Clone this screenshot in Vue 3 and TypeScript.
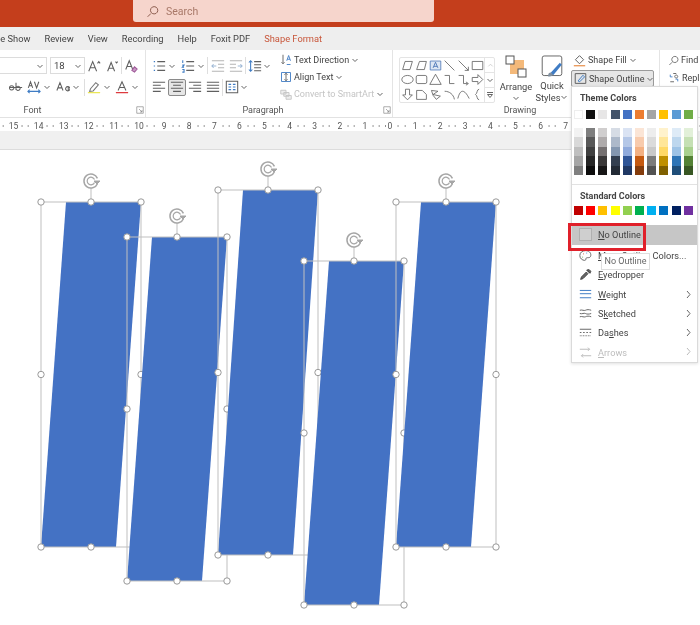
<script setup lang="ts">
import { h } from 'vue';

type Layer = [string, string, string?];

const ink = '#5f5f5f';
const blue = '#3f7cc4';
const icons: Record<string, Layer[]> = {
  search: [['#8a5a4c', 'M6 10.5 2 14.5M10 2a4.5 4.5 0 1 1-.01 0']],
  grow: [[ink, 'M2 14 6.5 3 11 14M3.8 10h5.4M12 5l1.5-2L15 5']],
  shrink: [[ink, 'M3 14 7 4l4 10M4.6 10.5h4.8M12 3l1.2 1.5L14.5 3']],
  clearfmt: [[ink, 'M2 12 6 2l4 10M3.4 8.5h5.2'], ['#a05a9a', 'M9 13l3-4 3 2.5-3 3.5z', '#c79ac4']],
  strike: [[ink, 'M3 6.5a2.5 2.5 0 1 0 .01 0M8 3v8.5M8 9a2.4 2.4 0 1 1 0 1M1 8.5h14']],
  spacing: [[ink, 'M1.5 9 4 2l2.5 7M2.4 6.5h3.2M8.5 2l2.5 7 2.5-7'], [blue, 'M1 13h14M3 11l-2 2 2 2M13 11l2 2-2 2']],
  change: [[ink, 'M1 12 4.5 3 8 12M2.2 9h4.6M13.5 7.5a2.5 2.5 0 1 0 .01 0M14 7v5']],
  highlight: [['#777', 'M4 10l6-7 3 2.5-6 7-4 .5z'], ['#e8e337', 'M1 14.5h14', 'none']],
  fontcolor: [[ink, 'M3.5 12 8 2l4.5 10M5 8.5h6'], ['#d7141a', 'M1 14.5h14']],
  bullets: [[blue, 'M2 3h1.5M2 8h1.5M2 13h1.5'], [ink, 'M6 3h9M6 8h9M6 13h9']],
  numbers: [[blue, 'M2 1.5v3M1.5 7h2l-2 2.5h2M1.5 12h2v3h-2'], [ink, 'M6 3h9M6 8h9M6 13h9']],
  indentDec: [['#b5b5b5', 'M1 2h14M8 6h7M8 10h7M1 14h14'], ['#9fb9d6', 'M6 8H1M3 6 1 8l2 2']],
  indentInc: [['#b5b5b5', 'M1 2h14M1 6h7M1 10h7M1 14h14'], ['#9fb9d6', 'M10 8h5M13 6l2 2-2 2']],
  linespace: [[blue, 'M3 2v12M1 4l2-2 2 2M1 12l2 2 2-2'], [ink, 'M7 3h8M7 6.5h8M7 10h8M7 13.5h8']],
  left: [[ink, 'M1 2.5h14M1 6h9M1 9.5h14M1 13h9']],
  center: [[ink, 'M1 2.5h14M3.5 6h9M1 9.5h14M3.5 13h9']],
  right: [[ink, 'M1 2.5h14M6 6h9M1 9.5h14M6 13h9']],
  justify: [[ink, 'M1 2.5h14M1 6h14M1 9.5h14M1 13h14']],
  columns: [[ink, 'M1.5 1.5h13v13h-13z'], [blue, 'M4 5h3M4 8h3M4 11h3M9 5h3M9 8h3M9 11h3']],
  textdir: [[ink, 'M4 1v12M2 11l2 2 2-2'], [blue, 'M9 9l2.5-7L14 9M9.8 7h3.4M9 14h5']],
  aligntext: [[blue, 'M2 2h12v12H2z'], [ink, 'M8 3v10M6 5l2-2 2 2M6 11l2 2 2-2']],
  smartart: [['#c4c4c4', 'M1 3h7v5H1zM5 6h7v5H5zM8 10h7v5H8z', '#eee']],
  launcher: [['#777', 'M1.5 1.5h13v13h-13zM6 6l6 6M8 12h4V8']],
  para: [[ink, 'M5 3h9l-3 10H2z']],
  para2: [[ink, 'M5.5 3H14l-2.5 10H2z']],
  textbox: [['#4f79b8', 'M1.5 2.5h13v11h-13z', '#dce6f3'], ['#3c6ab0', 'M5 11l3-7 3 7M6 9h4']],
  line: [[ink, 'M2 2l12 12']],
  linearrow: [[ink, 'M2 2l12 12M14 9.5V14H9.5']],
  rect: [[ink, 'M1.5 3h13v10h-13z']],
  oval: [[ink, 'M8 3c3.9 0 7 2.2 7 5s-3.1 5-7 5-7-2.2-7-5 3.1-5 7-5z']],
  rrect: [[ink, 'M3.5 3h9a2 2 0 0 1 2 2v6a2 2 0 0 1-2 2h-9a2 2 0 0 1-2-2V5a2 2 0 0 1 2-2z']],
  tri: [[ink, 'M8 1.5 15 14H1z']],
  elbow: [[ink, 'M2 3h6v10h6']],
  elbowarrow: [[ink, 'M2 3h6v10h5M11 11l3 2-3 2']],
  arrowr: [[ink, 'M1.5 5.5h7V2l6 6-6 6v-3.5h-7z']],
  arrowd: [[ink, 'M5.5 1.5v7H2l6 6 6-6h-3.5v-7z']],
  snip: [[ink, 'M2 3h7l5 5v6H2z']],
  freeform: [[ink, 'M3 3l8 1-6 4 9 2-5 4-4-5z']],
  arc: [[ink, 'M2 4c6 0 11 4 12 10']],
  curve: [[ink, 'M1 13C4 1 9 1 15 13']],
  brace: [[ink, 'M10 1.5C7 1.5 8 7 5.5 8 8 9 7 14.5 10 14.5']],
  find: [[ink, 'M6 10.5 2 14.5M10 2a4.5 4.5 0 1 1-.01 0']],
  replace: [[blue, 'M3 3.5v3h3M13 12.5v-3h-3'], [ink, 'M7 2h4M3 13h5M11 4a2 2 0 1 1-.01 0']],
  shapefill: [[ink, 'M3 7l5-5 5 5-5 5z'], ['#e2731d', 'M1 14.5h14']],
  shapeoutline: [[ink, 'M1.5 2h13v12h-13z'], ['#3f7cc4', 'M5 11l6-7 2 2-6 6z']],
  palette: [['#666', 'M8 2C4 2 1 4.500 1 8s3 6 6 6c2 0 1-2 2-3s5 1 5.500-3C15 4.500 12 2 8 2z'], ['#d05a3c', 'M5 6h1'], ['#3f7cc4', 'M9 5h1'], ['#5aa548', 'M4 10h1']],
  eyedropper: [['#444', 'M2 14l1-3 6-6 2 2-6 6zM10 3l3 3M9.500 2.500l4 4 1-2.500-2-2z', '#666']],
  weight: [[blue, 'M1 3h14M1 7h14M1 12h14']],
  sketched: [['#666', 'M1 4c3-1 5 1 7 0s4-1 7 0M1 8c3 1 5-1 7 0s4 1 7 0M1 12c3-1 5 1 7 0s4-1 7 0']],
  dashes: [['#666', 'M1 4h14M1 8h2m2 0h2m2 0h2m2 0h2M1 12h1m1 0h1m1 0h1m1 0h1m1 0h1m1 0h1m1 0h1']],
  arrows: [['#bbb', 'M1 4h12M11 2l2 2-2 2M15 12H3M5 10l-2 2 2 2']],
};

// tiny local icon renderer, every icon is a few stroked paths on a 16 box
const Ic = (props: { n: string; s?: number; w?: number }) =>
  h(
    'svg',
    { width: props.s ?? 14, height: props.s ?? 14, viewBox: '0 0 16 16', style: 'display:block;flex:none' },
    icons[props.n].map((l) =>
      h('path', { d: l[1], stroke: l[0], fill: l[2] ?? 'none', 'stroke-width': props.w ?? 1.2 }),
    ),
  );
const Chev = () =>
  h('svg', { width: 8, height: 8, viewBox: '0 0 8 8', style: 'display:block;flex:none' }, [
    h('path', { d: 'M1.500 3 4 5.500 6.500 3', stroke: '#666', fill: 'none', 'stroke-width': 1 }),
  ]);

const tabs = ['Slide Show', 'Review', 'View', 'Recording', 'Help', 'Foxit PDF'];
const ruler = [15, 14, 13, 12, 11, 10, 9, 8, 7, 6, 5, 4, 3, 2, 1, 0, 1, 2, 3, 4, 5, 6, 7, 8, 9, 10, 11, 12];

const gallery = [
  'para', 'para2', 'textbox', 'line', 'linearrow', 'rect',
  'oval', 'rrect', 'tri', 'elbow', 'elbowarrow', 'arrowr',
  'arrowd', 'snip', 'freeform', 'arc', 'curve', 'brace',
];

const themeTop = ['#FFFFFF', '#111111', '#E7E6E6', '#44546A', '#4472C4', '#ED7D31', '#A5A5A5', '#FFC000', '#5B9BD5', '#70AD47'];
const shades = [
  ['#F2F2F2', '#D9D9D9', '#BFBFBF', '#A6A6A6', '#7F7F7F'],
  ['#7F7F7F', '#595959', '#404040', '#262626', '#0D0D0D'],
  ['#D0CECE', '#AFABAB', '#757070', '#3A3838', '#171616'],
  ['#D6DCE5', '#ADB9CA', '#8497B0', '#333F50', '#222A35'],
  ['#DAE3F3', '#B4C7E7', '#8FAADC', '#2F5597', '#203864'],
  ['#FBE5D6', '#F8CBAD', '#F4B183', '#C55A11', '#843C0C'],
  ['#EDEDED', '#DBDBDB', '#C9C9C9', '#7B7B7B', '#525252'],
  ['#FFF2CC', '#FFE699', '#FFD966', '#BF9000', '#7F6000'],
  ['#DEEBF7', '#BDD7EE', '#9DC3E6', '#2E75B6', '#1F4E79'],
  ['#E2F0D9', '#C5E0B4', '#A9D18E', '#548235', '#385723'],
];
const standard = ['#C00000', '#FF0000', '#FFC000', '#FFFF00', '#92D050', '#00B050', '#00B0F0', '#0070C0', '#002060', '#7030A0'];

const menu = [
  { icon: 'palette', pre: '', u: 'M', post: 'ore Outline Colors...', chev: false, off: false },
  { icon: 'eyedropper', pre: '', u: 'E', post: 'yedropper', chev: false, off: false },
  { icon: 'weight', pre: '', u: 'W', post: 'eight', chev: true, off: false },
  { icon: 'sketched', pre: 'S', u: 'k', post: 'etched', chev: true, off: false },
  { icon: 'dashes', pre: 'Da', u: 's', post: 'hes', chev: true, off: false },
  { icon: 'arrows', pre: '', u: 'A', post: 'rrows', chev: true, off: true },
];

// x = left of bounding box, y / b = top / bottom, width is always 100, skew 25
const shapes = [
  { x: 41, y: 202, b: 547 },
  { x: 127, y: 237, b: 581 },
  { x: 218, y: 190, b: 555 },
  { x: 304, y: 261, b: 605 },
  { x: 396, y: 202, b: 547 },
];
function handles(s: { x: number; y: number; b: number }) {
  const m = (s.y + s.b) / 2;
  return [
    [s.x, s.y], [s.x + 50, s.y], [s.x + 100, s.y],
    [s.x, m], [s.x + 100, m],
    [s.x, s.b], [s.x + 50, s.b], [s.x + 100, s.b],
  ];
}
// rotate handle: two rings open on the right, small arrow head in the gap
function ring(s: { x: number; y: number }, r: number) {
  const cx = s.x + 50;
  const cy = s.y - 21;
  const dx = r * 0.92;
  const dy = r * 0.38;
  return `M${cx + dx} ${cy - dy}A${r} ${r} 0 1 0 ${cx + dx} ${cy + dy}`;
}
</script>

<template>
  <div class="app">
    <header class="titlebar">
      <div class="search">
        <Ic n="search" :s="13" />
        <span>Search</span>
      </div>
    </header>

    <nav class="tabs">
      <span v-for="t in tabs" :key="t">{{ t }}</span>
      <span class="active">Shape Format</span>
    </nav>

    <section class="ribbon">
      <div class="group font">
        <div class="body col">
          <div class="row r1">
            <div class="combo first"><Chev /></div>
            <div class="combo size"><span>18</span><Chev /></div>
            <span class="tool"><Ic n="grow" /></span>
            <span class="tool"><Ic n="shrink" /></span>
            <i class="sep"></i>
            <span class="tool"><Ic n="clearfmt" /></span>
          </div>
          <div class="row r2">
            <span class="tool"><Ic n="strike" /></span>
            <span class="tool"><Ic n="spacing" /></span>
            <span class="chev"><Chev /></span>
            <span class="tool gap3"><Ic n="change" /></span>
            <span class="chev"><Chev /></span>
            <i class="sep mx"></i>
            <span class="tool"><Ic n="highlight" /></span>
            <span class="chev"><Chev /></span>
            <span class="tool gap2"><Ic n="fontcolor" /></span>
            <span class="chev"><Chev /></span>
          </div>
        </div>
        <footer class="label l-font"><span>Font</span><Ic n="launcher" :s="8" class="launch" /></footer>
      </div>

      <div class="group para">
        <div class="body para-body">
          <div class="col para-left">
            <div class="row r1">
              <span class="tool"><Ic n="bullets" /></span>
              <span class="chev"><Chev /></span>
              <span class="tool gap3"><Ic n="numbers" /></span>
              <span class="chev"><Chev /></span>
              <i class="sep ml2"></i>
              <span class="tool ml1"><Ic n="indentDec" /></span>
              <span class="tool"><Ic n="indentInc" /></span>
              <i class="sep"></i>
              <span class="tool"><Ic n="linespace" /></span>
              <span class="chev neg"><Chev /></span>
            </div>
            <div class="row r2">
              <span class="tool"><Ic n="left" /></span>
              <span class="tool selected"><Ic n="center" /></span>
              <span class="tool"><Ic n="right" /></span>
              <span class="tool"><Ic n="justify" /></span>
              <i class="sep"></i>
              <span class="tool"><Ic n="columns" /></span>
              <span class="chev neg"><Chev /></span>
            </div>
          </div>
          <div class="col para-right">
            <div class="line"><Ic n="textdir" :s="12" />Text Direction<Chev /></div>
            <div class="line"><Ic n="aligntext" :s="12" />Align Text<Chev /></div>
            <div class="line dim"><Ic n="smartart" :s="12" />Convert to SmartArt<Chev /></div>
          </div>
        </div>
        <footer class="label l-para"><span>Paragraph</span><Ic n="launcher" :s="8" class="launch" /></footer>
      </div>

      <div class="group drawing">
        <div class="body draw-body">
          <div class="gallery">
            <div class="cells">
              <span v-for="(g, i) in gallery" :key="i" class="cell"><Ic :n="g" :s="13" :w="1" /></span>
            </div>
            <div class="scroll">
              <span><svg width="7" height="7" viewBox="0 0 8 8"><path d="M1.500 5 4 2.500 6.500 5" stroke="#ccc" fill="none" /></svg></span>
              <span><Chev /></span>
              <span><svg width="8" height="8" viewBox="0 0 8 8"><path d="M1 1.500h6M1.500 3.500 4 6.500l2.500-3z" stroke="#666" fill="none" /></svg></span>
            </div>
          </div>
          <div class="big arrange">
            <svg width="22" height="23" viewBox="0 0 22 23">
              <rect x="5" y="5" width="14" height="14" fill="#F4B97A" />
              <rect x="1" y="1" width="8" height="8" fill="#fff" stroke="#555" />
              <rect x="13" y="14" width="8" height="8" fill="#fff" stroke="#555" />
            </svg>
            <span class="big-text">Arrange</span>
            <Chev />
          </div>
          <div class="big quick">
            <svg width="22" height="23" viewBox="0 0 22 23">
              <rect x="1" y="1" width="20" height="20" rx="2" fill="#fff" stroke="#666" />
              <path d="M9 19 19 8l2 2-9 11z" fill="#3f7cc4" />
              <path d="M7 22c0-3 1-4 3-4l2 2c-1 2-3 2-5 2z" fill="#7f8f9f" />
            </svg>
            <span class="big-text">Quick</span>
            <span class="big-text styles">Styles<Chev /></span>
          </div>
          <div class="col fmt">
            <div class="line fill"><Ic n="shapefill" :s="13" />Shape Fill<Chev /></div>
            <div class="line outline"><Ic n="shapeoutline" :s="13" />Shape Outline<Chev /></div>
          </div>
        </div>
        <footer class="label l-draw"><span>Drawing</span></footer>
      </div>

      <div class="group editing">
        <div class="line"><Ic n="find" :s="11" />Find</div>
        <div class="line"><Ic n="replace" :s="12" />Replace</div>
      </div>
    </section>

    <div class="ruler">
      <span v-for="(n, i) in ruler" :key="i" class="tick"><b>{{ n }}</b></span>
    </div>
    <div class="band"></div>

    <main class="canvas">
      <svg width="700" height="475" viewBox="0 150 700 475">
        <g v-for="s in shapes" :key="s.x">
          <polygon :points="`${s.x + 25},${s.y} ${s.x + 100},${s.y} ${s.x + 75},${s.b} ${s.x},${s.b}`" fill="#4472C4" />
          <rect :x="s.x" :y="s.y" width="100" :height="s.b - s.y" fill="none" stroke="#BFBFBF" />
          <path :d="`M${s.x + 50} ${s.y}v-14`" stroke="#BFBFBF" />
          <g fill="none" stroke="#A6A6A6">
            <path stroke-width="1.500" fill="#fff" :d="ring(s, 7)" />
            <path stroke-width="1.200" :d="ring(s, 3.800)" />
            <path stroke-width="1" fill="#A6A6A6" :d="`M${s.x + 53} ${s.y - 21}h6l-3 3z`" />
          </g>
          <circle
            v-for="(p, i) in handles(s)"
            :key="i"
            :cx="p[0]"
            :cy="p[1]"
            r="3.200"
            fill="#fff"
            stroke="#999"
          />
        </g>
      </svg>
    </main>

    <!-- colour dropdown, sits over ribbon and canvas -->
    <div class="dropdown">
      <h4>Theme Colors</h4>
      <div class="swatches top">
        <i v-for="c in themeTop" :key="c" class="sw" :style="{ background: c }"></i>
      </div>
      <div class="shades">
        <div v-for="(col, i) in shades" :key="i" class="shade-col">
          <i v-for="c in col" :key="c" :style="{ background: c }"></i>
        </div>
      </div>
      <hr />
      <h4>Standard Colors</h4>
      <div class="swatches">
        <i v-for="c in standard" :key="c" class="sw" :style="{ background: c }"></i>
      </div>
      <div class="item none">
        <i class="nobox"></i>
        <span><u>N</u>o Outline</span>
      </div>
      <div v-for="m in menu" :key="m.u" class="item" :class="{ off: m.off }">
        <Ic :n="m.icon" :s="13" />
        <span>{{ m.pre }}<u>{{ m.u }}</u>{{ m.post }}</span>
        <svg v-if="m.chev" class="arrow" width="7" height="9" viewBox="0 0 7 9">
          <path d="M2 1l3 3.500L2 8" :stroke="m.off ? '#bbb' : '#666'" fill="none" />
        </svg>
      </div>
      <div class="redbox"></div>
      <div class="tip">No Outline</div>
    </div>
  </div>
</template>

<style>
body {
  margin: 0;
  background: #fff;
}
</style>

<style scoped>
.app {
  position: relative;
  width: 700px;
  height: 625px;
  overflow: hidden;
  background: #fff;
  font-family: Roboto, "Noto Sans", sans-serif;
  font-size: 9px;
  color: #444;
  display: flex;
  flex-direction: column;
  filter: blur(0.3px);
}
.titlebar {
  height: 27px;
  flex: none;
  background: #c43e1c;
  padding-left: 133px;
  box-sizing: border-box;
}
.search {
  width: 301px;
  height: 22px;
  background: #f6d5cc;
  border-radius: 0 0 3px 3px;
  display: flex;
  align-items: center;
  gap: 7px;
  padding-left: 13px;
  box-sizing: border-box;
  color: #a87868;
  font-size: 10.500px;
}
.tabs {
  height: 23px;
  flex: none;
  background: #eeeeee;
  display: flex;
  align-items: center;
  gap: 14px;
  margin-left: -15px;
  font-size: 9.300px;
  white-space: nowrap;
}
.tabs .active {
  color: #c8563a;
}
.ribbon {
  height: 68px;
  flex: none;
  display: flex;
  background: #fff;
  border-bottom: 1px solid #e2e2e2;
  box-sizing: border-box;
  overflow: hidden;
}
.group {
  height: 100%;
  flex: none;
  display: flex;
  flex-direction: column;
  border-right: 1px solid #e4e4e4;
  box-sizing: content-box;
}
.body {
  flex: 1;
  min-height: 0;
}
.col {
  display: flex;
  flex-direction: column;
}
.row {
  display: flex;
  align-items: center;
}
.r1 {
  height: 21px;
  margin-top: 5px;
}
.r2 {
  height: 18px;
  margin-top: 2px;
}
.label {
  height: 14px;
  flex: none;
  display: flex;
  align-items: center;
  justify-content: center;
  font-size: 9px;
  color: #555;
  position: relative;
}
.launch {
  position: absolute;
  right: 1px;
  top: 3px;
}
.font {
  width: 145px;
}
.l-font {
  padding-right: 80px;
}
.font .r2 {
  padding-left: 7px;
}
.combo {
  height: 17px;
  border: 1px solid #dcdcdc;
  border-left: 0;
  box-sizing: border-box;
  display: flex;
  align-items: center;
  justify-content: flex-end;
  padding-right: 2px;
  font-size: 9.500px;
}
.first {
  width: 47px;
}
.size {
  width: 35px;
  margin-left: 3px;
  border-left: 1px solid #dcdcdc;
  justify-content: space-between;
  padding-left: 3px;
}
.tool {
  width: 18px;
  height: 17px;
  flex: none;
  display: flex;
  align-items: center;
  justify-content: center;
  box-sizing: border-box;
}
.chev {
  width: 8px;
  flex: none;
  display: flex;
  justify-content: center;
}
.neg {
  margin-left: -1px;
}
.gap3 {
  margin-left: 3px;
}
.gap2 {
  margin-left: 2px;
}
.ml1 {
  margin-left: 1px;
}
.ml2 {
  margin-left: 2px;
}
.sep {
  width: 1px;
  height: 17px;
  flex: none;
  background: #dedede;
}
.mx {
  margin: 0 0 0 4px;
}
.selected {
  background: #e6e6e6;
  border: 1px solid #8a8a8a;
  border-radius: 2px;
}
.para {
  width: 246px;
}
.para-body {
  display: flex;
  padding-left: 4px;
}
.para-left {
  width: 126px;
  flex: none;
}
.para-right {
  margin-left: 4px;
  padding-top: 1px;
}
.line {
  height: 18px;
  display: flex;
  align-items: center;
  gap: 2px;
  white-space: nowrap;
  font-size: 9px;
}
.dim {
  color: #c4c4c4;
}
.l-para {
  padding-right: 12px;
}
.drawing {
  width: 266px;
}
.draw-body {
  display: flex;
  padding-left: 6px;
}
.gallery {
  width: 96px;
  height: 46px;
  margin-top: 7px;
  flex: none;
  display: flex;
  border: 1px solid #e4e4e4;
  box-sizing: border-box;
  border-radius: 2px;
}
.cells {
  flex: 1;
  display: grid;
  grid-template-columns: repeat(6, 14px);
  grid-auto-rows: 14.500px;
}
.cell {
  display: flex;
  align-items: center;
  justify-content: center;
}
.scroll {
  width: 10px;
  flex: none;
  display: flex;
  flex-direction: column;
  border-left: 1px solid #e4e4e4;
}
.scroll span {
  flex: 1;
  display: flex;
  align-items: center;
  justify-content: center;
  border-bottom: 1px solid #e4e4e4;
}
.scroll span:last-child {
  border-bottom: 0;
}
.big {
  display: flex;
  flex-direction: column;
  align-items: center;
  padding-top: 5px;
  flex: none;
}
.big-text {
  display: flex;
  align-items: center;
  height: 12px;
  margin-top: 2px;
  font-size: 9.300px;
}
.arrange {
  width: 40px;
  margin-left: 1px;
}
.arrange .big-text {
  margin-bottom: 2px;
}
.quick {
  width: 32px;
}
.styles {
  margin-top: 0;
}
.fmt {
  margin-left: 3px;
  padding-top: 2px;
}
.fill {
  height: 16px;
  padding-left: 2px;
}
.outline {
  width: 83px;
  height: 17px;
  margin-top: 2px;
  padding-left: 2px;
  box-sizing: border-box;
  background: #e6e6e6;
  border: 1px solid #9a9a9a;
  border-radius: 2px;
}
.l-draw {
  padding-right: 12px;
}
.editing {
  border-right: 0;
  padding: 1px 0 0 8px;
}
.ruler {
  height: 13px;
  flex: none;
  display: flex;
  align-items: center;
  padding: 3px 0 0 1px;
  box-sizing: border-box;
  background: #fff;
  font-size: 8.500px;
  color: #555;
  overflow: hidden;
}
.tick {
  width: 25.100px;
  flex: none;
  text-align: center;
  background: radial-gradient(circle, #888 0.6px, transparent 0.8px) -1px center / 6.300px 6px repeat-x;
}
.tick b {
  font-weight: 400;
  background: #fff;
  padding: 0 2px;
}
.band {
  height: 18px;
  flex: none;
  background: #f0f0f0;
  border-bottom: 1px solid #dcdcdc;
}
.canvas {
  flex: 1;
  min-height: 0;
}
.canvas svg {
  display: block;
}
.dropdown {
  position: absolute;
  left: 571px;
  top: 86px;
  width: 127px;
  height: 277px;
  box-sizing: border-box;
  background: #fff;
  border: 1px solid #dadada;
  box-shadow: 0 1px 3px rgba(0, 0, 0, 0.12);
  padding-top: 4px;
}
.dropdown h4 {
  margin: 0;
  padding-left: 8px;
  height: 14px;
  line-height: 14px;
  font-size: 9px;
  font-weight: 700;
  color: #444;
}
.swatches {
  display: flex;
  gap: 3.200px;
  padding-left: 2px;
  margin-top: 3.500px;
}
.swatches.top {
  margin-top: 4.500px;
}
.sw {
  width: 9px;
  height: 9px;
  flex: none;
  box-sizing: border-box;
}
.swatches.top .sw:first-child {
  border: 1px solid #eee;
}
.shades {
  display: flex;
  gap: 3.200px;
  padding-left: 2px;
  margin-top: 9.500px;
}
.shade-col {
  width: 9px;
  flex: none;
  display: flex;
  flex-direction: column;
}
.shade-col i {
  height: 9.400px;
}
hr {
  margin: 9px 0 4px;
  border: 0;
  border-top: 1px solid #e2e2e2;
}
.item {
  height: 19.300px;
  display: flex;
  align-items: center;
  gap: 6px;
  padding-left: 7px;
  position: relative;
  font-size: 9.200px;
  white-space: nowrap;
}
.item u {
  text-underline-offset: 1px;
}
.none {
  margin-top: 9.500px;
  background: #c6c6c6;
  height: 20px;
  margin-bottom: 1px;
}
.nobox {
  width: 13px;
  height: 13px;
  flex: none;
  background: #cfcfcf;
  border: 1px solid #b0b0b0;
  box-sizing: border-box;
}
.off {
  color: #bdbdbd;
}
.arrow {
  position: absolute;
  right: 5px;
  top: 5px;
}
.redbox {
  position: absolute;
  left: -4px;
  top: 136px;
  width: 78px;
  height: 28px;
  box-sizing: border-box;
  border: 3px solid #e0202a;
}
.tip {
  position: absolute;
  left: 29px;
  top: 166px;
  width: 49px;
  height: 17px;
  box-sizing: border-box;
  background: #fff;
  border: 1px solid #dedede;
  font-size: 9px;
  color: #666;
  text-align: center;
  line-height: 15px;
}
</style>
